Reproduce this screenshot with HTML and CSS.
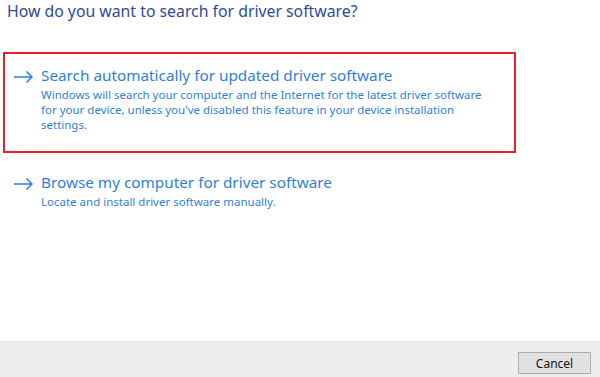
FILE: index.html
```html
<!DOCTYPE html>
<html lang="en">
<head>
  <meta charset="UTF-8" />
  <title>Update Drivers</title>
  <link rel="stylesheet" href="styles.css">
</head>
<body>
  <div class="wizard">
    <h1 class="instruction">How do you want to search for driver software?</h1>

    <div class="option selected">
      <svg class="arrow" viewBox="0 0 19 12" width="19" height="12">
        <path d="M0 6 H18 M12.5 0.5 L18 6 L12.5 11.5" fill="none" stroke="#2f7fd9" stroke-width="1.5"/>
      </svg>
      <div class="option-text">
        <div class="option-title">Search automatically for updated driver software</div>
        <div class="option-desc">Windows will search your computer and the Internet for the latest driver software for your device, unless you've disabled this feature in your device installation settings.</div>
      </div>
    </div>

    <div class="option">
      <svg class="arrow" viewBox="0 0 19 12" width="19" height="12">
        <path d="M0 6 H18 M12.5 0.5 L18 6 L12.5 11.5" fill="none" stroke="#2f7fd9" stroke-width="1.5"/>
      </svg>
      <div class="option-text">
        <div class="option-title">Browse my computer for driver software</div>
        <div class="option-desc">Locate and install driver software manually.</div>
      </div>
    </div>
  </div>

  <footer class="buttons">
    <button class="btn">Cancel</button>
  </footer>
</body>
</html>
```

FILE: styles.css
```css
body {
  margin: 0;
  font-family: 'Noto Sans', sans-serif;
  background: white;
  width: 600px;
  height: 377px;
  overflow: hidden;
}

.wizard {
  height: 341px;
  box-sizing: border-box;
  padding: 1px 0 0 0;
}

.instruction {
  margin: 0 0 0 7px;
  font-size: 15.8px;
  font-weight: normal;
  color: #2d4b9c;
  line-height: 21px;
}

.option {
  display: flex;
  align-items: flex-start;
  width: 513px;
  box-sizing: border-box;
  padding: 11px 10px 0 9px;
  margin-left: 3px;
}

.option.selected {
  margin-top: 30px;
  height: 101px;
  border: 2px solid #e3202b;
}

.option + .option {
  margin-top: 6px;
  border: 2px solid transparent;
}

.arrow {
  flex: none;
  margin-top: 6px;
  margin-right: 8px;
}

.option-title {
  font-size: 15.3px;
  color: #2f7fd9;
  line-height: 20px;
}

.option-desc {
  font-size: 11.5px;
  color: #2f7fd9;
  line-height: 15px;
  margin-top: 2px;
  width: 448px;
}

.buttons {
  height: 36px;
  background: #eeeeee;
  border-top: 1px solid #e3e3e3;
  box-sizing: border-box;
  display: flex;
  justify-content: flex-end;
  align-items: flex-start;
  padding: 10px 9px 0 0;
}

.btn {
  width: 73px;
  height: 22px;
  background: #e1e1e1;
  border: 1px solid #adadad;
  font-family: 'Noto Sans', sans-serif;
  font-size: 12px;
  color: #111;
  padding: 0;
}
```
